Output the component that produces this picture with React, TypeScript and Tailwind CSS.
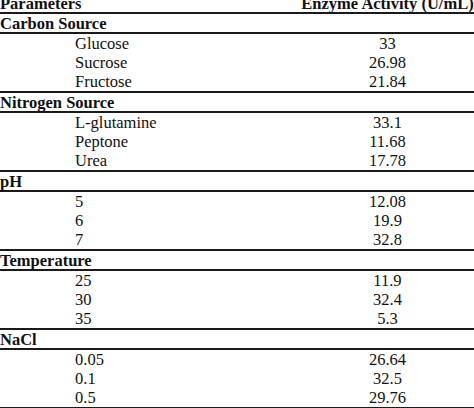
const GROUPS = [
  {
    title: "Carbon Source",
    rows: [
      ["Glucose", "33"],
      ["Sucrose", "26.98"],
      ["Fructose", "21.84"],
    ],
  },
  {
    title: "Nitrogen Source",
    rows: [
      ["L-glutamine", "33.1"],
      ["Peptone", "11.68"],
      ["Urea", "17.78"],
    ],
  },
  {
    title: "pH",
    rows: [
      ["5", "12.08"],
      ["6", "19.9"],
      ["7", "32.8"],
    ],
  },
  {
    title: "Temperature",
    rows: [
      ["25", "11.9"],
      ["30", "32.4"],
      ["35", "5.3"],
    ],
  },
  {
    title: "NaCl",
    rows: [
      ["0.05", "26.64"],
      ["0.1", "32.5"],
      ["0.5", "29.76"],
    ],
  },
];

export default function App() {
  return (
    <div className="h-[408px] w-[474px] overflow-hidden bg-white text-[16.5px] text-[#111] [font-family:'Liberation_Serif','Times_New_Roman',serif]">
      <div className="w-[477px]">
        <div className="flex h-[14px] items-end border-b-2 border-[#1a1a1a] font-bold leading-[17px]">
          <div className="w-[301px]">Parameters</div>
          <div className="w-[173px] whitespace-nowrap text-center">Enzyme Activity (U/mL)</div>
        </div>

        {GROUPS.map((g) => (
          <div key={g.title}>
            <div className="h-[20px] border-b-2 border-[#1a1a1a] font-bold leading-[20px]">
              {g.title}
            </div>
            <div className="border-b-2 border-[#1a1a1a]">
              {g.rows.map(([label, value]) => (
                <div key={label} className="flex h-[19px] leading-[19px]">
                  <div className="w-[301px] pl-[75px]">{label}</div>
                  <div className="w-[173px] text-center">{value}</div>
                </div>
              ))}
            </div>
          </div>
        ))}
      </div>
    </div>
  );
}
